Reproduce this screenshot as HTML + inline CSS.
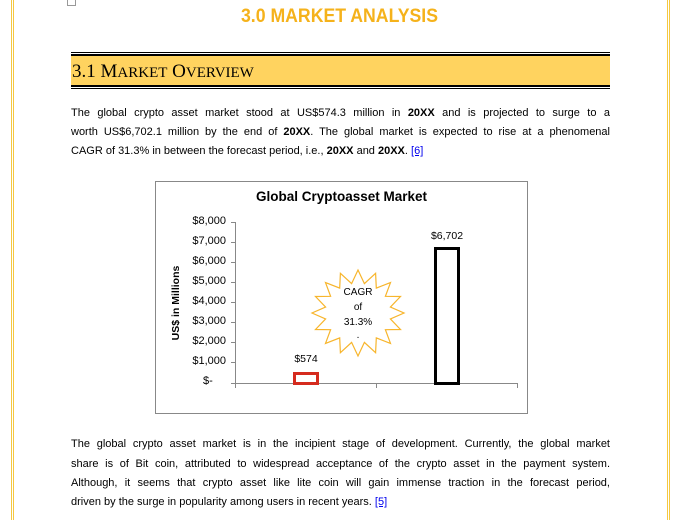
<!DOCTYPE html>
<html><head><meta charset="utf-8"><style>
body{margin:0;width:679px;height:520px;background:#fff;position:relative;overflow:hidden;font-family:"Liberation Sans",sans-serif;color:#000}
.v{position:absolute;top:0;height:520px;width:1px;background:#f5c842}
.ln{position:absolute;left:71px;width:539px;font-size:11px;text-align:justify;text-align-last:justify;white-space:nowrap;line-height:13px}
.ln.l{text-align-last:left}
a{color:#00e;text-decoration:underline}
.t{position:absolute;font-size:11px}
</style></head><body>
<div class="v" style="left:11px"></div><div class="v" style="left:13px"></div>
<div class="v" style="left:667px"></div><div class="v" style="left:669px"></div>
<div style="position:absolute;left:67px;top:-5px;width:7px;height:9px;border:1px solid #999"></div>
<div style="position:absolute;left:0;width:679px;top:6px;text-align:center;font-weight:bold;font-size:19px;color:#f5b21b;transform:scaleX(0.93)">3.0 MARKET ANALYSIS</div>
<div style="position:absolute;left:71px;top:52px;width:539px;height:1px;background:#000"></div>
<div style="position:absolute;left:71px;top:54px;width:539px;height:2px;background:#000"></div>
<div style="position:absolute;left:71px;top:56px;width:539px;height:29px;background:#ffd35f"></div>
<div style="position:absolute;left:71px;top:85px;width:539px;height:2px;background:#000"></div>
<div style="position:absolute;left:71px;top:88px;width:539px;height:1px;background:#000"></div>
<div style="position:absolute;left:72px;top:61px;font-family:'Liberation Serif',serif;font-size:19px;">3.1 M<span style="font-size:15px">ARKET</span> O<span style="font-size:15px">VERVIEW</span></div>

<div class="ln" style="top:107px">The global crypto asset market stood at US$574.3 million in <b>20XX</b> and is projected to surge to a</div>
<div class="ln" style="top:126px">worth US$6,702.1 million by the end of <b>20XX</b>. The global market is expected to rise at a phenomenal</div>
<div class="ln l" style="top:145px">CAGR of 31.3% in between the forecast period, i.e., <b>20XX</b> and <b>20XX</b>. <a>[6]</a></div>

<div style="position:absolute;left:155px;top:181px;width:371px;height:231px;border:1px solid #888"></div>
<div style="position:absolute;left:155px;top:189px;width:373px;text-align:center;font-weight:bold;font-size:13.5px">Global Cryptoasset Market</div>
<div style="position:absolute;left:126px;top:297px;transform:rotate(-90deg);font-weight:bold;font-size:10.5px;width:100px;text-align:center">US$ in Millions</div>
<div class="t" style="left:170px;top:215px;width:56px;text-align:right">$8,000</div>
<div class="t" style="left:170px;top:235px;width:56px;text-align:right">$7,000</div>
<div class="t" style="left:170px;top:255px;width:56px;text-align:right">$6,000</div>
<div class="t" style="left:170px;top:275px;width:56px;text-align:right">$5,000</div>
<div class="t" style="left:170px;top:295px;width:56px;text-align:right">$4,000</div>
<div class="t" style="left:170px;top:315px;width:56px;text-align:right">$3,000</div>
<div class="t" style="left:170px;top:335px;width:56px;text-align:right">$2,000</div>
<div class="t" style="left:170px;top:355px;width:56px;text-align:right">$1,000</div>
<div class="t" style="left:203px;top:375px">$-</div>
<svg style="position:absolute;left:0;top:0" width="679" height="520">
<g stroke="#888" stroke-width="1">
<line x1="235.5" y1="222" x2="235.5" y2="384"/>
<line x1="231" y1="222.5" x2="235" y2="222.5"/><line x1="231" y1="242.5" x2="235" y2="242.5"/><line x1="231" y1="262.5" x2="235" y2="262.5"/><line x1="231" y1="282.5" x2="235" y2="282.5"/><line x1="231" y1="302.5" x2="235" y2="302.5"/><line x1="231" y1="322.5" x2="235" y2="322.5"/><line x1="231" y1="342.5" x2="235" y2="342.5"/><line x1="231" y1="362.5" x2="235" y2="362.5"/>
<line x1="231" y1="383.5" x2="517" y2="383.5"/>
<line x1="235.5" y1="383" x2="235.5" y2="388"/><line x1="376.5" y1="383" x2="376.5" y2="388"/><line x1="517.5" y1="383" x2="517.5" y2="388"/>
</g>
<rect x="294.5" y="373.5" width="23" height="10" fill="#fff" stroke="#d52b1e" stroke-width="3"/>
<rect x="435.5" y="248.5" width="23" height="135" fill="#fff" stroke="#000" stroke-width="3"/>
<polygon id="st" fill="#fff" stroke="#f7b52c" stroke-width="1.2" points=""/>
<text x="306" y="362" font-size="10.5" text-anchor="middle" font-family="Liberation Sans">$574</text>
<text x="447" y="239" font-size="10.5" text-anchor="middle" font-family="Liberation Sans">$6,702</text>
<text x="358" y="295" font-size="10" text-anchor="middle" font-family="Liberation Sans">CAGR</text>
<text x="358" y="310" font-size="10" text-anchor="middle" font-family="Liberation Sans">of</text>
<text x="358" y="325" font-size="10" text-anchor="middle" font-family="Liberation Sans">31.3%</text>
<text x="358" y="338" font-size="10" text-anchor="middle" font-family="Liberation Sans">.</text>
</svg>
<script>
var p=[],cx=358,cy=313,n=16;
for(var i=0;i<2*n;i++){var a=Math.PI*i/n-Math.PI/2,r=i%2?33:46,ry=i%2?30:43;p.push((cx+r*Math.cos(a)).toFixed(1)+","+(cy+ry*Math.sin(a)).toFixed(1));}
document.getElementById('st').setAttribute('points',p.join(' '));
</script>

<div class="ln" style="top:438px">The global crypto asset market is in the incipient stage of development. Currently, the global market</div>
<div class="ln" style="top:458px">share is of Bit coin, attributed to widespread acceptance of the crypto asset in the payment system.</div>
<div class="ln" style="top:477px">Although, it seems that crypto asset like lite coin will gain immense traction in the forecast period,</div>
<div class="ln l" style="top:496px">driven by the surge in popularity among users in recent years. <a>[5]</a></div>
</body></html>
